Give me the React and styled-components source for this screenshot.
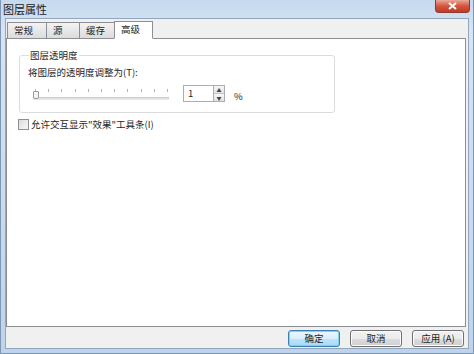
import styled, { createGlobalStyle } from "styled-components";

const Global = createGlobalStyle`
  html, body { margin: 0; padding: 0; }
  body {
    width: 474px;
    height: 354px;
    overflow: hidden;
    font-family: "Noto Sans CJK SC", "Liberation Sans", sans-serif;
    font-size: 9.5px;
    color: #1e1e1e;
  }
`;

const Window = styled.div`
  width: 474px;
  height: 354px;
  box-sizing: border-box;
  display: flex;
  flex-direction: column;
  padding: 0 4px 4px 4px;
  background: linear-gradient(180deg, #c6d9ee 0%, #d6e4f3 30px, #bfd3ea 100%);
  border-left: 1px solid #7f97b3;
  border-right: 1px solid #7f97b3;
  border-bottom: 1px solid #7f97b3;
`;

const TitleBar = styled.div`
  height: 18px;
  display: flex;
  align-items: flex-start;
  justify-content: space-between;
`;

const Title = styled.span`
  font-size: 11px;
  line-height: 16px;
  margin-top: 1px;
  margin-left: -2px;
  color: #1a1a1a;
`;

const CloseButton = styled.div`
  width: 33px;
  height: 12px;
  margin-right: -1px;
  border: 1px solid #8d3b32;
  border-top: none;
  border-radius: 0 0 4px 4px;
  background: linear-gradient(180deg, #e9a99b 0%, #d4553f 50%, #c23a22 100%);
  display: flex;
  align-items: center;
  justify-content: center;
`;

const Body = styled.div`
  flex: 1;
  display: flex;
  flex-direction: column;
  background: #f0f0f0;
  border: 1px solid #92a6bf;
  padding: 2px 1px 0 0;
`;

const TabRow = styled.div`
  display: flex;
  align-items: flex-end;
  height: 17px;
  padding-left: 1px;
  position: relative;
  z-index: 1;
`;

const Tab = styled.div`
  width: ${(p) => p.$w}px;
  height: ${(p) => (p.$active ? 18 : 16)}px;
  box-sizing: border-box;
  border: 1px solid #8c8e94;
  border-left: ${(p) => (p.$first || p.$active ? "1px solid #8c8e94" : "none")};
  border-bottom: ${(p) => (p.$active ? "1px solid #fff" : "none")};
  margin-left: ${(p) => (p.$active ? -1 : 0)}px;
  background: ${(p) =>
    p.$active ? "#fff" : "linear-gradient(180deg, #f3f3f3 0%, #e6e6e6 55%, #dcdcdc 100%)"};
  padding-left: 6px;
  line-height: 14px;
  margin-bottom: ${(p) => (p.$active ? -1 : 0)}px;
`;

const Panel = styled.div`
  height: 289px;
  margin-right: 1px;
  background: #fff;
  border: 1px solid #8c8e94;
  padding: 10px 0 0 12px;
  box-sizing: border-box;
  display: flex;
  flex-direction: column;
  align-items: flex-start;
`;

const Group = styled.fieldset`
  width: 316px;
  height: 64px;
  box-sizing: border-box;
  margin: 0;
  border: 1px solid #dcdcdc;
  border-radius: 3px;
  padding: 4px 0 0 8px;
  display: flex;
  flex-direction: column;
`;

const Legend = styled.legend`
  padding: 0 1px;
  margin-left: 1px;
  line-height: 12px;
`;

const FieldLabel = styled.div`
  line-height: 13px;
  margin-top: 1px;
`;

const Row = styled.div`
  display: flex;
  align-items: center;
  margin-top: 5px;
`;

const Slider = styled.div`
  position: relative;
  width: 136px;
  height: 14px;
  margin-left: 5px;
  margin-right: 14px;
  margin-top: 4px;
`;

const Ticks = styled.div`
  display: flex;
  justify-content: space-between;
  padding: 0 1px 0 2px;
  height: 3px;
`;

const Tick = styled.span`
  width: 1px;
  height: 3px;
  background: #b5b5b5;
`;

const Track = styled.div`
  margin-top: 5px;
  height: 2px;
  background: #e4e4e4;
  border-top: 1px solid #c9c9c9;
`;

const Thumb = styled.div`
  position: absolute;
  left: 0;
  top: 2px;
  width: 4px;
  height: 6px;
  border: 1px solid #9a9a9a;
  border-radius: 1px 1px 2px 2px;
  background: #f4f4f4;
`;

const Spin = styled.div`
  display: flex;
  height: 17px;
`;

const SpinInput = styled.div`
  width: 30px;
  box-sizing: border-box;
  border: 1px solid #abadb3;
  border-right: none;
  padding-left: 4px;
  line-height: 15px;
  background: #fff;
`;

const SpinButtons = styled.div`
  width: 10px;
  display: flex;
  flex-direction: column;
  border: 1px solid #abadb3;
`;

const SpinButton = styled.div`
  flex: 1;
  background: linear-gradient(180deg, #f6f6f6, #e2e2e2);
  border-top: ${(p) => (p.$down ? "1px solid #c4c4c4" : "none")};
  display: flex;
  align-items: center;
  justify-content: center;
  font-size: 5px;
  color: #444;
  line-height: 5px;
`;

const Percent = styled.span`
  margin-left: 9px;
  margin-top: 5px;
  font-size: 9.5px;
`;

const CheckRow = styled.label`
  display: flex;
  align-items: center;
  margin-top: 5px;
  margin-left: -1px;
  line-height: 13px;
`;

const CheckBox = styled.span`
  width: 9px;
  height: 9px;
  border: 1px solid #8f8f8f;
  background: linear-gradient(135deg, #dcdcdc, #f7f7f7);
  margin-right: 2px;
`;

const Footer = styled.div`
  flex: 1;
  display: flex;
  justify-content: flex-end;
  align-items: center;
  gap: 10px;
  padding-right: 3px;
  padding-top: 1px;
`;

const Button = styled.div`
  width: 52px;
  height: 17px;
  box-sizing: border-box;
  border: 1px solid ${(p) => (p.$default ? "#3c7fb1" : "#707070")};
  border-radius: 3px;
  background: ${(p) =>
    p.$default
      ? "linear-gradient(180deg, #eaf6fd 0%, #d9f0fc 50%, #bee6fd 51%, #a7d9f5 100%)"
      : "linear-gradient(180deg, #f2f2f2 0%, #ebebeb 50%, #dddddd 51%, #cfcfcf 100%)"};
  box-shadow: inset 0 0 0 1px ${(p) => (p.$default ? "#7fd0f5" : "#fcfcfc")};
  text-align: center;
  line-height: 15px;
`;

export default function App() {
  return (
    <>
      <Global />
      <Window>
        <TitleBar>
          <Title>图层属性</Title>
          <CloseButton>
            <svg width="9" height="8" viewBox="0 0 9 8">
              <path d="M1 1 L8 7 M8 1 L1 7" stroke="#fff" strokeWidth="2" />
            </svg>
          </CloseButton>
        </TitleBar>
        <Body>
          <TabRow>
            <Tab $w={40} $first>常规</Tab>
            <Tab $w={33}>源</Tab>
            <Tab $w={35}>缓存</Tab>
            <Tab $w={39} $active>高级</Tab>
          </TabRow>
          <Panel>
            <Group>
              <Legend>图层透明度</Legend>
              <FieldLabel>将图层的透明度调整为(T):</FieldLabel>
              <Row>
                <Slider>
                  <Ticks>
                    {Array.from({ length: 11 }).map((_, i) => (
                      <Tick key={i} />
                    ))}
                  </Ticks>
                  <Track />
                  <Thumb />
                </Slider>
                <Spin>
                  <SpinInput>1</SpinInput>
                  <SpinButtons>
                    <SpinButton>▲</SpinButton>
                    <SpinButton $down>▼</SpinButton>
                  </SpinButtons>
                </Spin>
                <Percent>%</Percent>
              </Row>
            </Group>
            <CheckRow>
              <CheckBox />
              允许交互显示"效果"工具条(I)
            </CheckRow>
          </Panel>
          <Footer>
            <Button $default>确定</Button>
            <Button>取消</Button>
            <Button>应用 (A)</Button>
          </Footer>
        </Body>
      </Window>
    </>
  );
}
